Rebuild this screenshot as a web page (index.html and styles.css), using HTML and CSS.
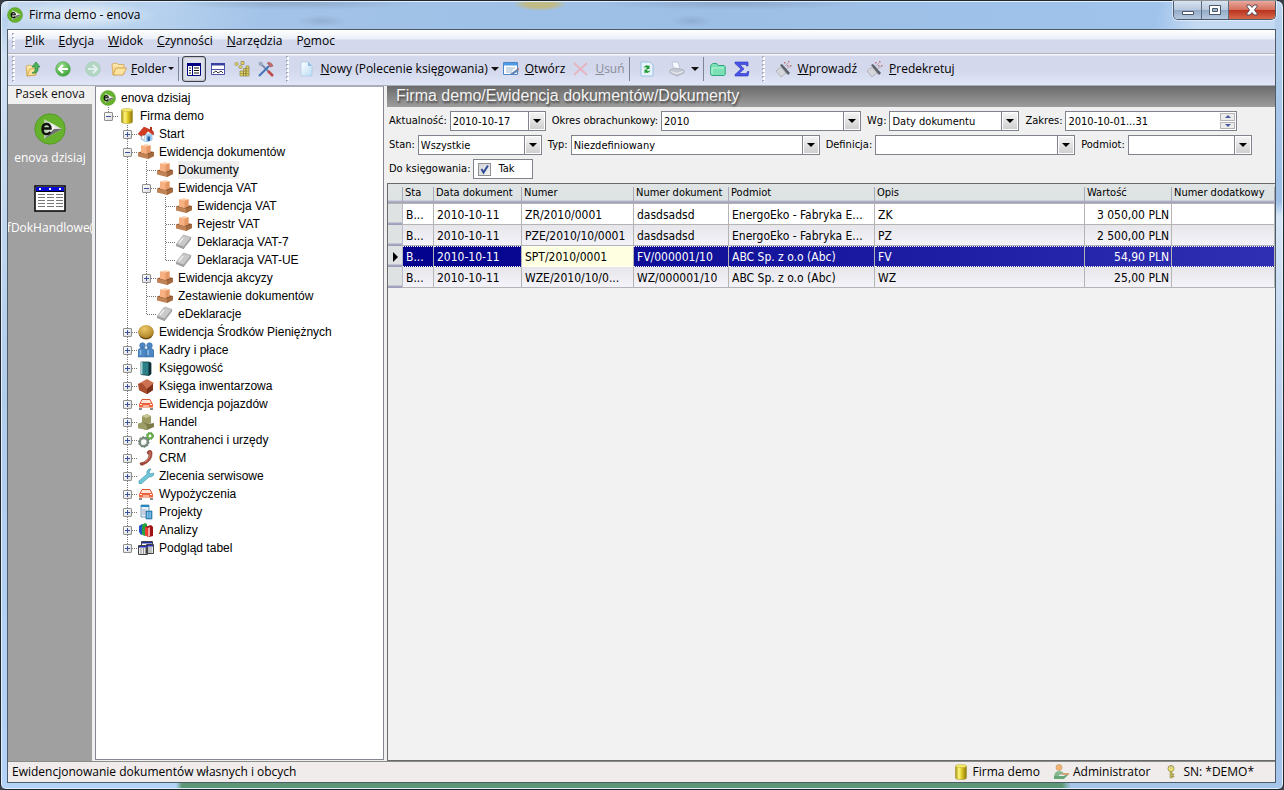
FILE: index.html
```html
<!DOCTYPE html>
<html lang="pl">
<head>
<meta charset="utf-8">
<meta name="viewport" content="width=device-width, initial-scale=1">
<title>Firma demo - enova</title>
<link rel="stylesheet" href="styles.css">
</head>
<body>
<svg class="defs" aria-hidden="true">
  <defs>
    <linearGradient id="gold" x1="0" x2="1"><stop offset="0" stop-color="#a08b10"/><stop offset=".3" stop-color="#fff67c"/><stop offset=".6" stop-color="#dcc420"/><stop offset="1" stop-color="#8a7710"/></linearGradient>
    <linearGradient id="tri" x1="0" x2="1"><stop offset="0" stop-color="#a9c99a"/><stop offset=".5" stop-color="#f4f4f4"/><stop offset="1" stop-color="#c4c4c4"/></linearGradient>
    <linearGradient id="paper" x1="0" x2="1" y1="0" y2="1"><stop offset="0" stop-color="#fff"/><stop offset="1" stop-color="#b9dcf6"/></linearGradient>
    <linearGradient id="fold" x1="0" x2="0" y1="0" y2="1"><stop offset="0" stop-color="#fdf0bd"/><stop offset="1" stop-color="#f0c15c"/></linearGradient>
    <radialGradient id="coin" cx=".4" cy=".3" r=".8"><stop offset="0" stop-color="#ecc868"/><stop offset="1" stop-color="#a67a1e"/></radialGradient>
    <radialGradient id="ball" cx=".4" cy=".3" r=".8"><stop offset="0" stop-color="#9fe08c"/><stop offset="1" stop-color="#2c9a2f"/></radialGradient>
    <symbol id="i-enova" viewBox="0 0 32 32"><circle cx="16" cy="16" r="15.200" fill="#66b22c" stroke="#4c9620" stroke-width=".8"/><path d="M10 6 28 16 10 26Z" fill="url(#tri)"/><path d="M10 26 28 16 20 16Z" fill="#6e6e6e"/><path d="M9 15.500h7.500c0-6-8-6-8 .5s5.500 6 8 3" fill="none" stroke="#111" stroke-width="2.400"/></symbol>
    <symbol id="i-db" viewBox="0 0 16 16"><path d="M2.500 2v12c0 2 11 2 11 0V2z" fill="url(#gold)" stroke="#a39020" stroke-width=".5"/><ellipse cx="8" cy="2" rx="5.500" ry="1.500" fill="#f6ec70" stroke="#b9a230" stroke-width=".5"/></symbol>
    <symbol id="i-home" viewBox="0 0 16 16"><path d="M3 8v5l5 3 6-2V8z" fill="#dcefff" stroke="#79a8cc" stroke-width=".6"/><path d="M8 9v7l6-2V8z" fill="#9cc9ee"/><path d="M0 8 6 1l9 4 1 4-2-1-4-3-5 6z" fill="#d23b22" stroke="#9f2512" stroke-width=".5"/><path d="M12 1h2v4h-2z" fill="#b83018"/><path d="M4 9.500h2.500v4H4z" fill="#fff" stroke="#999" stroke-width=".4"/><path d="M9.500 10.500h2.500V15H9.500z" fill="#245a9c"/></symbol>
    <symbol id="i-box" viewBox="0 0 16 16"><path d="M0 8.500 4 7l12 1v4l-6 3-10-2.500z" fill="#c08355"/><path d="M10 10.500 16 8v4l-6 3z" fill="#a5693f"/><path d="m0 8.500 10 2L16 8l-6-1z" fill="#7e4d2a"/><path d="M3 1.500 8 .5l4.500.8v7L8 10 3 8.800z" fill="#f7b081"/><path d="m8.500 2.500 4-1.200v7L8.500 10z" fill="#e59766"/><path d="m3 1.500 5.500 1 4-1.200L8 .5z" fill="#ffd3b2"/></symbol>
    <symbol id="i-doc" viewBox="0 0 16 16"><path d="M0 10.500 7.500 1 15 3.500 7.500 13z" fill="#c9c9c9" stroke="#949494" stroke-width=".6"/><path d="m0 10.500 7.500 2.500v2L0 12zM7.500 13 15 3.500v2L7.500 15z" fill="#808080"/><path d="m0 11.500 7.500 2.500L15 4.500" stroke="#ddd" stroke-width=".5" fill="none"/><path d="m3 9 4-5" stroke="#eee" stroke-width="1.500"/></symbol>
    <symbol id="i-coin" viewBox="0 0 16 16"><ellipse cx="8" cy="9" rx="7.500" ry="6.500" fill="#6e4d10"/><ellipse cx="8" cy="7.500" rx="7.700" ry="6.500" fill="url(#coin)"/></symbol>
    <symbol id="i-people" viewBox="0 0 16 16"><g fill="#4d88c4" stroke="#2c5f97" stroke-width=".5"><circle cx="4.500" cy="3.500" r="2.800"/><circle cx="11.500" cy="3.500" r="2.800"/><path d="M0 15V9q0-3 4.500-3T8.500 9v6z"/><path d="M8 15V9q0-3 3.500-3T16 9v6z"/></g><path d="M2.500 8v5M10 8v5" stroke="#8fbce8" stroke-width="1.500"/></symbol>
    <symbol id="i-book" viewBox="0 0 16 16"><path d="M3 2h8l2 1v11l-2 1.500-8-1z" fill="#2b8187" stroke="#123f44" stroke-width=".8"/><path d="m10.500 2 2.500 1v11l-2.500 1.500z" fill="#102c36"/><path d="M2.500 2h2v12.500l-2-.5z" fill="#a4cfd0"/></symbol>
    <symbol id="i-inv" viewBox="0 0 16 16"><path d="M1 7v5l8 4 6-4V5z" fill="#8d3b22"/><path d="M0 6 9 1l7 4-7 6z" fill="#cc7250"/><path d="m0 6 4-1 5 6v5l-8-4z" fill="#a94d2f"/><path d="M9 11l6-5v6l-6 4z" fill="#7b301b"/></symbol>
    <symbol id="i-car" viewBox="0 0 16 16"><path d="M4 3.500h8l2 4H2z" fill="#ffe3d8" stroke="#dc5835"/><path d="M1 7.500h14v4H1z" fill="#f0673d"/><path d="M2 8.500h2M12 8.500h2M5 10h6" stroke="#fff" stroke-width="1.200"/><path d="M1 12v2h3v-2M12 12v2h3v-2" fill="#888"/></symbol>
    <symbol id="i-trade" viewBox="0 0 16 16"><path d="M4 2 9 0l4 2v7l-5 2-4-2z" fill="#9b9b62"/><path d="m4 2 4 2 5-2-4-2z" fill="#c8c899"/><path d="m0 10 5-2 5 2 6-1v4l-7 3-9-2z" fill="#7c7c48"/><path d="m0 10 5-2 4 4v4l-9-2z" fill="#9d9d68"/></symbol>
    <symbol id="i-gears" viewBox="0 0 16 16"><circle cx="5.800" cy="10" r="4" fill="none" stroke="#7d8e80" stroke-width="2.500"/><circle cx="5.800" cy="10" r="5.200" fill="none" stroke="#5b6e60" stroke-dasharray="1.600 1.600"/><circle cx="12" cy="4" r="2.400" fill="none" stroke="#69ae50" stroke-width="2"/><circle cx="12" cy="4" r="3.500" fill="none" stroke="#408733" stroke-dasharray="1.400 1.400"/><path d="M3 12q3 2 5-1" stroke="#dfeae0" fill="none"/></symbol>
    <symbol id="i-phone" viewBox="0 0 16 16"><path d="M10 1q3-2 4 1 1 9-9 13-3 1-3-2l4-1q5-3 5-7l-2-2z" fill="#a84a3a" stroke="#7c2d22" stroke-width=".6"/><path d="M12 2q1 6-5 10" fill="none" stroke="#d58a79"/></symbol>
    <symbol id="i-wrench" viewBox="0 0 16 16"><path d="M1 13 9 6q-1-3 2-5h2l-2 3 1 2 4-1q0 4-5 4l-8 7q-3 0-2-3z" fill="#6fc7d8" stroke="#3b91a5" stroke-width=".6"/></symbol>
    <symbol id="i-proj" viewBox="0 0 16 16"><path d="M3 1h8v12H3z" fill="#e4f1fb" stroke="#7b9fb9"/><path d="M3 1h8v2H3z" fill="#2688bf"/><path d="M5 5v6M7 5v6" stroke="#99b" stroke-width=".8"/><path d="M8 7h6v8H8z" fill="#3a94c9" stroke="#1d6290" stroke-width=".6"/><path d="M9 9h4M9 11h4M9 13h4" stroke="#d9f1ff" stroke-dasharray="1 .6"/></symbol>
    <symbol id="i-chart" viewBox="0 0 16 16"><path d="m1 4 3-2 2 1v9l-3 1-2-3z" fill="#2455c8"/><path d="m4 3 3-2 2 1v11l-3 1-2-2z" fill="#29a13c"/><path d="M7 5 13 3l2 2v9l-4 1-4-2z" fill="#9e1414"/><path d="m7 5 3 1v9l-3-2z" fill="#ee3d33"/><path d="m10 6 2-1v9l-2 1z" fill="#f6a6a0"/></symbol>
    <symbol id="i-tables" viewBox="0 0 16 16"><path d="M3.500 1.500h11v9h-11z" fill="#fff" stroke="#444"/><path d="M4 2h10v1.500H4z" fill="#222c9c"/><path d="M.5 5.500h9v9h-9zM8.500 4.500h7v9h-7z" fill="#e8e8e8" stroke="#444"/><path d="M1 6h8v1.500H1zM9 5h6v1.500H9z" fill="#2630b4"/><path d="M3 8v6M5.500 8v6M7.500 8v6M11 7v6M13 7v6" stroke="#999"/></symbol>
    <symbol id="i-up" viewBox="0 0 16 16"><path d="M1 5l4-1 1 1h5v9l-9 1z" fill="url(#fold)" stroke="#c79a3e" stroke-width=".7"/><path d="m2 15 3-7 8-1-3 7z" fill="#fae29b" stroke="#c79a3e" stroke-width=".7"/><path d="M7 12q4-1 3-6H7l4-5 4 5h-2q1 7-6 6z" fill="#50b35a" stroke="#27803c" stroke-width=".7"/></symbol>
    <symbol id="i-back" viewBox="0 0 16 16"><circle cx="8" cy="8" r="7.300" fill="url(#ball)" stroke="#5cae5c" stroke-width=".7"/><path d="M13 8H5M8 4 4 8l4 4" fill="none" stroke="#fff" stroke-width="2.200"/></symbol>
    <symbol id="i-fwd" viewBox="0 0 16 16"><circle cx="8" cy="8" r="7.300" fill="#b2d6c2" stroke="#a6cdba" stroke-width=".7"/><path d="M3 8h8M8 4l4 4-4 4" fill="none" stroke="#e2eeee" stroke-width="2.200"/></symbol>
    <symbol id="i-folder" viewBox="0 0 16 16"><path d="M1 3l5-1 1 1.500h6V13l-11 1z" fill="url(#fold)" stroke="#cf9b45" stroke-width=".7"/><path d="m2 14 3-7h10.500L12 14z" fill="#fbe3a0" stroke="#cf9b45" stroke-width=".8"/></symbol>
    <symbol id="i-list" viewBox="0 0 16 16"><path d="M1.500 2.500h13v12h-13z" fill="#fff" stroke="#000080"/><path d="M1 2h14v3H1z" fill="#000080"/><path d="M6.500 4v10" stroke="#000080"/><path d="M3 7h2M3 9.500h2M3 12h2M8 7h5M8 9.500h5M8 12h5" stroke="#111"/></symbol>
    <symbol id="i-form" viewBox="0 0 16 16"><path d="M1.500 2.500h13v11h-13z" fill="#fff" stroke="#4b52a8"/><path d="M1 2h14v2.500H1z" fill="#3940a0"/><path d="M1 8.500h14" stroke="#4b52a8"/><path d="m3 12 3-2 2 2 3-2 2 2" fill="none" stroke="#333"/></symbol>
    <symbol id="i-grid" viewBox="0 0 16 16"><g fill="#e4d468" stroke="#817637" stroke-width=".6"><path d="m2.500 1 2 2-2 2-2-2zM6.500 4l2 2-2 2-2-2z"/><path d="M7 .5h3v3H7zM6 10h3.500v5H6zM9.500 7.500H12V15H9.500zM12 5h3v10h-3zM6 12.500h9M9.500 10H15M12 7.500h3"/></g></symbol>
    <symbol id="i-tools" viewBox="0 0 16 16"><path d="M3 3 14 14" stroke="#7a89a8" stroke-width="1.800"/><path d="M1 1q4-1 4 3l-3 1q-2-1-1-4z" fill="#9daac3"/><path d="M10 10 15 15" stroke="#c14a4a" stroke-width="2.500"/><path d="M1 15 11 5" stroke="#4374b9" stroke-width="2"/><path d="M9 2q4-2 6 3l-3 1-1-2z" fill="#c06b6b" stroke="#954646" stroke-width=".5"/></symbol>
    <symbol id="i-new" viewBox="0 0 16 16"><path d="M3 1h7l4 4v10H3z" fill="url(#paper)" stroke="#a6c8e6" stroke-width=".7"/><path d="M10 1v4h4z" fill="#8ebce2"/></symbol>
    <symbol id="i-open" viewBox="0 0 16 16"><path d="M.5 1.500h14v12H.5z" fill="#fff" stroke="#4d86c9"/><path d="M1 2h13v2.500H1z" fill="#4b9be6"/><path d="M3 7h9M3 9h7M3 11h6" stroke="#9eb5ce"/><path d="M7 13l7-5 2 2-7 4z" fill="#6687b4"/><path d="m14 8 2-1v2z" fill="#d25f48"/></symbol>
    <symbol id="i-del" viewBox="0 0 16 16"><path d="m1 2 13 12M14 2 1 14" stroke="#e6b5bf" stroke-width="1.800"/></symbol>
    <symbol id="i-ref" viewBox="0 0 16 16"><path d="M2 1h9l3 3v11H2z" fill="#e8f3fd" stroke="#8db7dc" stroke-width=".8"/><path d="M4.500 7q2-4 5-2l1-1v4H7l1-1.500Q6 6 4.500 7zM11.500 9q-1.500 4-5 2.500l-1 1V8.500H9L8 10q2 .5 3.500-1z" fill="#1d9a2c"/></symbol>
    <symbol id="i-print" viewBox="0 0 16 16"><path d="m3 1 6 0 2 6-6 2z" fill="#f4f7fb" stroke="#a6b1c2" stroke-width=".6"/><path d="m1 9 5-2 9 2v3l-7 3-7-3z" fill="#c4c8d2" stroke="#9ba1ad" stroke-width=".6"/><path d="m2 10.500 6 2 6-2" stroke="#f3f3f3" fill="none"/></symbol>
    <symbol id="i-gfold" viewBox="0 0 16 16"><path d="M.7 13.500v-9l2-2h4l1.500 2h6l1 1v8l-1 1H2z" fill="#7be0b3" stroke="#2fa67d"/><path d="M2 13V7h12" fill="none" stroke="#b7f6da" stroke-width="1.200"/></symbol>
    <symbol id="i-sigma" viewBox="0 0 16 16"><path d="M1 1h13v4h-1.500L12 3.500H6L10 8l-5 4.500h7.500l1-2H15L14 15H1v-1.500L7 8 1 2.500z" fill="#4a55e8" stroke="#2733bc" stroke-width=".6"/></symbol>
    <symbol id="i-wand" viewBox="0 0 16 16"><path d="m0 10 5-4 5 6-5 4z" fill="#d4d6da" stroke="#9a9da4" stroke-width=".6"/><path d="m4 4 2-1 8 9-2 2z" fill="#5b5f68"/><path d="M8 6 12 2M10 8l5-3" stroke="#9c9ca5" stroke-width=".7"/><g fill="#c77878"><path d="M8 1h1.500v1.500H8zM12 0h1.500v1.500H12zM14 4h1.500v1.500H14zM11 4h1.500v1.500H11z"/></g></symbol>
    <symbol id="i-admin" viewBox="0 0 16 16"><circle cx="6" cy="3.500" r="3" fill="#efb476" stroke="#c4894f" stroke-width=".5"/><path d="M1 14q0-7 5-7 4 0 5 3l-5 1v4H2z" fill="#84b890"/><path d="M1 12h10l4-3v2l-4 4H1z" fill="#69a77b"/><path d="M9 9h7v2H9z" fill="#d3a271"/></symbol>
    <symbol id="i-key" viewBox="0 0 16 16"><circle cx="8" cy="4.500" r="3" fill="#f5ea75" stroke="#89823e" stroke-width=".8"/><circle cx="8" cy="3.500" r="1" fill="#fff" stroke="#89823e" stroke-width=".5"/><path d="M7 8h2v6H7zM9 10h2v1H9zM9 12h2v1H9z" fill="#cfc35b" stroke="#89823e" stroke-width=".5"/></symbol>
    <symbol id="i-tbl" viewBox="0 0 32 28"><path d="M1 1h30v25H1z" fill="#fff" stroke="#000" stroke-width="1.500"/><path d="M2 2h28v4H2z" fill="#0a0ad8"/><path d="M5 3h2v2H5zM15 3h2v2h-2zM25 3h2v2h-2z" fill="#fff"/><path d="M2 6.500h28" stroke="#000"/><path d="M4 9.500h7M13 9.500h7M22 9.500h7M4 12.500h7M13 12.500h7M22 12.500h7M4 15.500h7M13 15.500h7M22 15.500h7M4 18.500h7M13 18.500h7M22 18.500h7M4 21.500h7M13 21.500h7M22 21.500h7" stroke="#777"/></symbol>
  </defs>
</svg>

<div class="window">
  <header class="titlebar">
    <div class="glow"><svg class="ic"><use href="#i-enova"/></svg><h1>Firma demo - enova</h1></div>
    <div class="caption">
      <button class="cap cap-min" aria-label="Minimalizuj"><svg viewBox="0 0 14 12"><path d="M1.500 7.500h11v3h-11z" fill="#fff" stroke="#4c5768"/></svg></button>
      <button class="cap" aria-label="Maksymalizuj"><svg viewBox="0 0 14 12"><path d="M1.500 1.500h11v9h-11z" fill="#fff" stroke="#4c5768"/><path d="M4.500 4.500h5v3h-5z" fill="#9fb4cd" stroke="#4c5768"/></svg></button>
      <button class="cap cap-close" aria-label="Zamknij"><svg viewBox="0 0 14 12"><path d="M2 1h3l2 2.500L9 1h3v1.500L9.500 6 12 9.500V11H9L7 8.500 5 11H2V9.500L4.500 6 2 2.500z" fill="#fff" stroke="#5a4a58"/></svg></button>
    </div>
  </header>

  <div class="client">
    <nav class="menubar">
      <span class="grip"></span>
      <button><u>P</u>lik</button><button><u>E</u>dycja</button><button><u>W</u>idok</button><button><u>C</u>zynności</button><button><u>N</u>arzędzia</button><button>P<u>o</u>moc</button>
    </nav>
    <div class="toolbar" role="toolbar">
      <div class="group nav">
        <span class="grip"></span>
        <button aria-label="W górę"><svg class="ic"><use href="#i-up"/></svg></button>
        <button aria-label="Wstecz"><svg class="ic"><use href="#i-back"/></svg></button>
        <button aria-label="Dalej" disabled><svg class="ic"><use href="#i-fwd"/></svg></button>
        <button><svg class="ic"><use href="#i-folder"/></svg><span><u>F</u>older</span><i class="caret"></i></button>
      </div>
      <span class="sep"></span>
      <div class="group views">
        <button class="pressed" aria-label="Lista"><svg class="ic"><use href="#i-list"/></svg></button>
        <button aria-label="Formularz"><svg class="ic"><use href="#i-form"/></svg></button>
        <button aria-label="Układ"><svg class="ic"><use href="#i-grid"/></svg></button>
        <button aria-label="Narzędzia"><svg class="ic"><use href="#i-tools"/></svg></button>
      </div>
      <div class="group edit">
        <span class="grip"></span>
        <button class="new"><svg class="ic"><use href="#i-new"/></svg><span><u>N</u>owy (Polecenie księgowania)</span><i class="caret"></i></button>
        <button><svg class="ic"><use href="#i-open"/></svg><span><u>O</u>twórz</span></button>
        <button disabled><svg class="ic"><use href="#i-del"/></svg><span><u>U</u>suń</span></button>
      </div>
      <span class="sep"></span>
      <div class="group output">
        <button aria-label="Odśwież"><svg class="ic"><use href="#i-ref"/></svg></button>
        <button aria-label="Drukuj"><svg class="ic"><use href="#i-print"/></svg><i class="caret"></i></button>
      </div>
      <span class="sep"></span>
      <div class="group sums">
        <button aria-label="Załączniki"><svg class="ic"><use href="#i-gfold"/></svg></button>
        <button aria-label="Suma"><svg class="ic"><use href="#i-sigma"/></svg></button>
      </div>
      <div class="group post">
        <span class="grip"></span>
        <button><svg class="ic"><use href="#i-wand"/></svg><span><u>W</u>prowadź</span></button>
        <button><svg class="ic"><use href="#i-wand"/></svg><span><u>P</u>redekretuj</span></button>
      </div>
    </div>

    <main class="work">
      <aside class="bar">
        <h2>Pasek enova</h2>
        <button><svg class="big"><use href="#i-enova"/></svg><span>enova dzisiaj</span></button>
        <button><svg class="big"><use href="#i-tbl"/></svg><span>fDokHandlowe(</span></button>
      </aside>

      <nav class="tree">
        <a class="row" href="#"><svg class="ic"><use href="#i-enova"/></svg>enova dzisiaj</a>
        <ul>
          <li>
            <div class="row"><span class="node"><button class="tw open" aria-label="Zwiń"></button></span><svg class="ic"><use href="#i-db"/></svg><a href="#">Firma demo</a></div>
            <ul>
              <li><div class="row"><span class="node"><button class="tw" aria-label="Rozwiń"></button></span><svg class="ic"><use href="#i-home"/></svg><a href="#">Start</a></div></li>
              <li>
                <div class="row"><span class="node"><button class="tw open" aria-label="Zwiń"></button></span><svg class="ic"><use href="#i-box"/></svg><a href="#">Ewidencja dokumentów</a></div>
                <ul>
                  <li><div class="row"><span class="node"></span><svg class="ic"><use href="#i-box"/></svg><a class="current" href="#">Dokumenty</a></div></li>
                  <li>
                    <div class="row"><span class="node"><button class="tw open" aria-label="Zwiń"></button></span><svg class="ic"><use href="#i-box"/></svg><a href="#">Ewidencja VAT</a></div>
                    <ul>
                      <li><div class="row"><span class="node"></span><svg class="ic"><use href="#i-box"/></svg><a href="#">Ewidencja VAT</a></div></li>
                      <li><div class="row"><span class="node"></span><svg class="ic"><use href="#i-box"/></svg><a href="#">Rejestr VAT</a></div></li>
                      <li><div class="row"><span class="node"></span><svg class="ic"><use href="#i-doc"/></svg><a href="#">Deklaracja VAT-7</a></div></li>
                      <li><div class="row"><span class="node"></span><svg class="ic"><use href="#i-doc"/></svg><a href="#">Deklaracja VAT-UE</a></div></li>
                    </ul>
                  </li>
                  <li><div class="row"><span class="node"><button class="tw" aria-label="Rozwiń"></button></span><svg class="ic"><use href="#i-box"/></svg><a href="#">Ewidencja akcyzy</a></div></li>
                  <li><div class="row"><span class="node"></span><svg class="ic"><use href="#i-box"/></svg><a href="#">Zestawienie dokumentów</a></div></li>
                  <li><div class="row"><span class="node"></span><svg class="ic"><use href="#i-doc"/></svg><a href="#">eDeklaracje</a></div></li>
                </ul>
              </li>
              <li><div class="row"><span class="node"><button class="tw" aria-label="Rozwiń"></button></span><svg class="ic"><use href="#i-coin"/></svg><a href="#">Ewidencja Środków Pieniężnych</a></div></li>
              <li><div class="row"><span class="node"><button class="tw" aria-label="Rozwiń"></button></span><svg class="ic"><use href="#i-people"/></svg><a href="#">Kadry i płace</a></div></li>
              <li><div class="row"><span class="node"><button class="tw" aria-label="Rozwiń"></button></span><svg class="ic"><use href="#i-book"/></svg><a href="#">Księgowość</a></div></li>
              <li><div class="row"><span class="node"><button class="tw" aria-label="Rozwiń"></button></span><svg class="ic"><use href="#i-inv"/></svg><a href="#">Księga inwentarzowa</a></div></li>
              <li><div class="row"><span class="node"><button class="tw" aria-label="Rozwiń"></button></span><svg class="ic"><use href="#i-car"/></svg><a href="#">Ewidencja pojazdów</a></div></li>
              <li><div class="row"><span class="node"><button class="tw" aria-label="Rozwiń"></button></span><svg class="ic"><use href="#i-trade"/></svg><a href="#">Handel</a></div></li>
              <li><div class="row"><span class="node"><button class="tw" aria-label="Rozwiń"></button></span><svg class="ic"><use href="#i-gears"/></svg><a href="#">Kontrahenci i urzędy</a></div></li>
              <li><div class="row"><span class="node"><button class="tw" aria-label="Rozwiń"></button></span><svg class="ic"><use href="#i-phone"/></svg><a href="#">CRM</a></div></li>
              <li><div class="row"><span class="node"><button class="tw" aria-label="Rozwiń"></button></span><svg class="ic"><use href="#i-wrench"/></svg><a href="#">Zlecenia serwisowe</a></div></li>
              <li><div class="row"><span class="node"><button class="tw" aria-label="Rozwiń"></button></span><svg class="ic"><use href="#i-car"/></svg><a href="#">Wypożyczenia</a></div></li>
              <li><div class="row"><span class="node"><button class="tw" aria-label="Rozwiń"></button></span><svg class="ic"><use href="#i-proj"/></svg><a href="#">Projekty</a></div></li>
              <li><div class="row"><span class="node"><button class="tw" aria-label="Rozwiń"></button></span><svg class="ic"><use href="#i-chart"/></svg><a href="#">Analizy</a></div></li>
              <li><div class="row"><span class="node"><button class="tw" aria-label="Rozwiń"></button></span><svg class="ic"><use href="#i-tables"/></svg><a href="#">Podgląd tabel</a></div></li>
            </ul>
          </li>
        </ul>
      </nav>

      <section class="panel">
        <h2 class="crumb">Firma demo/Ewidencja dokumentów/Dokumenty</h2>
        <form class="filters">
          <div class="line">
            <label for="f1">Aktualność:</label><select id="f1" class="w-s"><option>2010-10-17</option></select>
            <label for="f2">Okres obrachunkowy:</label><select id="f2" class="w-l"><option>2010</option></select>
            <label for="f3">Wg:</label><select id="f3" class="w-m"><option>Daty dokumentu</option></select>
            <label for="f4">Zakres:</label><span class="spin"><input id="f4" type="text" value="2010-10-01...31"><span class="arrows"><button type="button" aria-label="Następny"><i class="tri up"></i></button><button type="button" aria-label="Poprzedni"><i class="tri down"></i></button></span></span>
          </div>
          <div class="line">
            <label for="f5">Stan:</label><select id="f5" class="w-m"><option>Wszystkie</option></select>
            <label for="f6">Typ:</label><select id="f6" class="w-xl"><option>Niezdefiniowany</option></select>
            <label for="f7">Definicja:</label><select id="f7" class="w-l"><option></option></select>
            <label for="f8">Podmiot:</label><select id="f8" class="w-m"><option></option></select>
          </div>
          <div class="line">
            <span class="cap-label">Do księgowania:</span><label class="check"><input type="checkbox" checked><span>Tak</span></label>
          </div>
        </form>
        <div class="gridwrap">
          <table class="grid">
            <colgroup><col class="c-h"><col class="c-sta"><col class="c-date"><col class="c-num"><col class="c-doc"><col class="c-sub"><col><col class="c-val"><col class="c-add"></colgroup>
            <thead><tr><th></th><th>Sta</th><th>Data dokument</th><th>Numer</th><th>Numer dokument</th><th>Podmiot</th><th>Opis</th><th>Wartość</th><th>Numer dodatkowy</th></tr></thead>
            <tbody>
              <tr><th></th><td>B...</td><td>2010-10-11</td><td>ZR/2010/0001</td><td>dasdsadsd</td><td>EnergoEko - Fabryka E...</td><td>ZK</td><td class="r">3 050,00 PLN</td><td></td></tr>
              <tr class="alt"><th></th><td>B...</td><td>2010-10-11</td><td>PZE/2010/10/0001</td><td>dasdsadsd</td><td>EnergoEko - Fabryka E...</td><td>PZ</td><td class="r">2 500,00 PLN</td><td></td></tr>
              <tr class="sel"><th><i class="marker"></i></th><td>B...</td><td>2010-10-11</td><td class="edit-cell">SPT/2010/0001</td><td>FV/000001/10</td><td>ABC Sp. z o.o (Abc)</td><td>FV</td><td class="r">54,90 PLN</td><td></td></tr>
              <tr class="alt"><th></th><td>B...</td><td>2010-10-11</td><td>WZE/2010/10/0...</td><td>WZ/000001/10</td><td>ABC Sp. z o.o (Abc)</td><td>WZ</td><td class="r">25,00 PLN</td><td></td></tr>
            </tbody>
          </table>
        </div>
      </section>
    </main>

    <footer class="status">
      <span class="msg">Ewidencjonowanie dokumentów własnych i obcych</span>
      <span class="item"><svg class="ic"><use href="#i-db"/></svg>Firma demo</span>
      <span class="item"><svg class="ic"><use href="#i-admin"/></svg>Administrator</span>
      <span class="item"><svg class="ic"><use href="#i-key"/></svg>SN: *DEMO*</span>
    </footer>
  </div>
</div>
</body>
</html>
```
FILE: styles.css
```css
:root {
  --ui: "Open Sans", "Noto Sans", sans-serif;
  --tahoma: "DejaVu Sans Condensed", "Noto Sans", sans-serif;
  --arial: "Liberation Sans", Arial, sans-serif;
}
* { box-sizing: border-box; }
body { margin: 0; background: #3a3f48; font: 12px/16px var(--ui); color: #000; }
button { border: 0; padding: 0; background: none; font: inherit; color: inherit; }
h1, h2 { margin: 0; font: inherit; }
ul { list-style: none; margin: 0; padding: 0; }
a { color: inherit; text-decoration: none; }
.defs { position: absolute; width: 0; height: 0; }
.ic { width: 16px; height: 16px; flex: none; }

.window {
  min-height: 100vh;
  display: flex;
  flex-direction: column;
  padding: 0 7px 6px 6px;
  border: 1px solid #20262e;
  border-radius: 7px 7px 6px 6px;
  box-shadow: inset 0 0 0 1px #e4effa;
  background:
    linear-gradient(90deg, #b4d3f8 175px, #5b9774 181px, #5b9774 1061px, #a7c5ea 1070px) bottom / 100% 6px no-repeat,
    linear-gradient(#d7e5f4, #b6d0ec 18px, #cfe0f2 55px, #b0cdec 50%, #b4d3f8) left / 7px 100% no-repeat,
    linear-gradient(#c4d9f2, #b6d0ec 18px, #9dbfe6 200px, #d7e6f6 215px, #9dc0e6 75%, #a7c5ea) right / 8px 100% no-repeat,
    radial-gradient(closest-side, #c9b96ecc 50%, #c9b96e00) 512px -4px / 54px 14px no-repeat,
    radial-gradient(closest-side, #7d93b280, #7d93b200) 594px -5px / 270px 14px no-repeat,
    radial-gradient(closest-side, #7d93b280, #7d93b200) 170px -5px / 250px 14px no-repeat,
    radial-gradient(closest-side, #7d93b266, #7d93b200) 296px 14px / 50px 12px no-repeat,
    radial-gradient(closest-side, #7d93b266, #7d93b200) 670px 14px / 42px 12px no-repeat,
    linear-gradient(100deg, #c4d8ee, #b6d1ee 160px, #a3c3e8 260px, #9dbfe6 700px, #a0c3eb 1140px, #c4d9f2 1180px);
}
.titlebar { height: 28px; display: flex; justify-content: space-between; align-items: flex-start; }
.glow { display: flex; align-items: center; gap: 6px; height: 28px; padding-right: 16px; background: radial-gradient(closest-side, #e8f1fa, #e8f1fa00); }
.caption { display: flex; border: 1px solid #4c5a6b; border-top: 0; border-radius: 0 0 5px 5px; overflow: hidden; box-shadow: 0 0 0 1px #ffffff80; }
.cap { width: 27px; height: 18px; display: grid; place-items: center; background: linear-gradient(#d8e3ef, #b9cadf 48%, #93a9c4 50%, #b5c8df); border-left: 1px solid #5d6c80; }
.cap-min { border-left: 0; }
.cap svg { width: 14px; height: 12px; }
.cap-close { width: 47px; background: linear-gradient(#e9a99d, #d5705e 48%, #b7301c 50%, #d9694a); }

.client { flex: 1; display: flex; flex-direction: column; border: 1px solid #4e5b68; background: #f0f0f0; }
.menubar { height: 24px; display: flex; align-items: center; gap: 14px; padding: 0 4px 2px; background: linear-gradient(#fff, #eaeff7 9px, #d3d8ec 10px, #d3d8ec); border-bottom: 1px solid #b4b4b8; }
.grip { width: 3px; height: 16px; background: linear-gradient(#fff, #fff) 1px 1px / 2px 2px, #a9aec4; background: conic-gradient(from 90deg at 1px 1px, #fff 25%, transparent 0) 0 0 / 3px 4px, conic-gradient(from 270deg at 2px 2px, #a4a9be 25%, transparent 0) 0 0 / 3px 4px; }
.menubar .grip { margin-right: -4px; }
.toolbar { height: 32px; display: flex; align-items: center; padding: 0 4px 2px; background: linear-gradient(#f6f8fd 1px, #d3d8ec 2px, #d3d8ec 16px, #e0e6f8); border-bottom: 1px solid #a9adba; }
.toolbar .grip { height: 26px; }
.toolbar button { display: flex; align-items: center; gap: 6px; height: 26px; white-space: nowrap; }
.toolbar button:disabled { color: #8a8d98; }
.group { display: flex; align-items: center; gap: 8px; }
.nav { gap: 14px; }
.nav .grip { margin-right: -4px; }
.toolbar .nav button:last-child { margin-left: -4px; gap: 4px; }
.caret { width: 0; height: 0; border: 4px solid transparent; border-top-color: #111; border-bottom: 0; }
.nav .caret { border-width: 3px 3px 0; margin-left: -2px; }
.sep { width: 1px; height: 24px; margin: 0 3px 0 4px; background: #7f8496; }
.views .pressed { width: 24px; margin-right: -4px; justify-content: center; border: 1px solid #3c4050; border-radius: 3px; background: #dfe1ea; box-shadow: inset 0 0 2px #777; }
.views { margin-right: 12px; }
.edit .grip, .post .grip { margin-right: 1px; }
.toolbar .new { margin-right: -4px; }
.new .caret { margin-left: -3px; }
.output { gap: 14px; padding-left: 6px; }
.sums { padding: 0 12px 0 3px; }
.post { gap: 10px; }

.work { flex: 1; display: flex; }
.bar { width: 84px; flex: none; display: flex; flex-direction: column; background: #a0a0a0; color: #fff; overflow: hidden; }
.bar h2 { height: 18px; text-align: center; background: #f0f0f0; color: #111; line-height: 16px; }
.bar button { display: flex; flex-direction: column; align-items: center; gap: 4px; white-space: nowrap; }
.bar button:nth-of-type(1) { margin: 9px 0 17px; }
.big { width: 32px; height: 32px; }
.bar span { line-height: 17px; }

.tree { width: 289px; flex: none; margin: 0 3px 1px 3px; padding: 2px 0 0 3px; background: #fff; border: 1px solid #828790; border-top-color: #a9adba; font: 12px/18px var(--arial); white-space: nowrap; }
.row { display: flex; align-items: center; height: 18px; }
.row .ic { margin: 0 5px 0 1px; }
.node { width: 19px; height: 18px; display: grid; place-items: center; background: repeating-linear-gradient(90deg, #777 0 1px, transparent 1px 2px) 10px 9px / 9px 1px no-repeat; }
.tree ul ul { padding-left: 19px; }
.tree li { position: relative; }
.tree li::before { content: ""; position: absolute; left: 9px; top: 0; bottom: 0; width: 1px; background: repeating-linear-gradient(#777 0 1px, transparent 1px 2px); }
.tree li:last-child::before { bottom: auto; height: 10px; }
.tw { position: relative; width: 9px; height: 9px; border: 1px solid #8f8f8f; border-radius: 1px; background: linear-gradient(#3a52a0, #3a52a0) 1px 3px / 5px 1px no-repeat, linear-gradient(#3a52a0, #3a52a0) 3px 1px / 1px 5px no-repeat, linear-gradient(135deg, #fff, #dcdcdc); }
.tw.open { background: linear-gradient(#3a52a0, #3a52a0) 1px 3px / 5px 1px no-repeat, linear-gradient(135deg, #fff, #dcdcdc); }
.current { background: #eee; }

.panel { flex: 1; min-width: 0; display: flex; flex-direction: column; }
.crumb { height: 21px; padding-left: 9px; background: linear-gradient(#6b6b6b, #9d9d9d); color: #f4f4f4; font: 16px/20px var(--arial); text-shadow: 1px 2px 2px #444; }
.filters { display: flex; flex-direction: column; gap: 4px; padding: 4px 0 4px 2px; font: 11px/14px var(--tahoma); }
.line { display: flex; align-items: center; white-space: nowrap; }
.line > label, .cap-label { margin-right: 3px; }
.line select + label { margin-left: 6px; }
select, .spin, .check { height: 20px; border: 1px solid #7f838b; border-radius: 0; background-color: #fff; font: inherit; color: #000; }
select { appearance: none; padding: 1px 20px 0 2px; background: #fff url("data:image/svg+xml,%3Csvg xmlns='http://www.w3.org/2000/svg' width='17' height='18'%3E%3ClinearGradient id='g' x2='0' y2='1'%3E%3Cstop stop-color='%23f4f4f4'/%3E%3Cstop offset='1' stop-color='%23cfcfcf'/%3E%3C/linearGradient%3E%3Cpath d='M0 0h17v18H0z' fill='%23fff'/%3E%3Cpath d='M0 0h1v18H0z' fill='%237f838b'/%3E%3Cpath d='M2 1h14v16H2z' fill='url(%23g)'/%3E%3Cpath d='M5 7h8L9 11z'/%3E%3C/svg%3E") right center no-repeat; }
.w-s { width: 96px; }
.w-m { width: 124px; }
#f3 { width: 130px; }
.w-l { width: 200px; }
.w-xl { width: 249px; }
.spin { width: 172px; display: flex; }
.spin input { flex: 1; min-width: 0; border: 0; padding: 1px 2px 0; font: inherit; outline: 0; }
.arrows { display: flex; flex-direction: column; width: 17px; padding: 1px; gap: 1px; }
.arrows button { flex: 1; display: grid; place-items: center; border: 1px solid #b5b5b5; background: #ececec; }
.tri { border: 3px solid transparent; }
.up { border-top: 0; border-bottom-color: #4a5a9c; }
.down { border-bottom: 0; border-top-color: #4a5a9c; }
.check { display: flex; align-items: center; gap: 7px; width: 60px; padding-left: 4px; }
.check input { appearance: none; margin: 0; width: 13px; height: 13px; border: 1px solid #8e8f8f; background: url("data:image/svg+xml,%3Csvg xmlns='http://www.w3.org/2000/svg' viewBox='0 0 11 11'%3E%3Cpath d='M2.500 5l2 3.500L9 1.500' fill='none' stroke='%23314e94' stroke-width='2'/%3E%3C/svg%3E") center / 11px no-repeat, linear-gradient(135deg, #d2d4d8, #f4f4f4); }

.gridwrap { flex: 1; background: #f2f2f2; border: 1px solid #6a6a6a; border-right: 0; }
.grid { width: 100%; table-layout: fixed; border-collapse: separate; border-spacing: 0; font: 12px/16px var(--tahoma); }
.c-h { width: 15px; }
.c-sta { width: 31px; }
.c-date { width: 88px; }
.c-num { width: 112px; }
.c-doc { width: 95px; }
.c-sub { width: 146px; }
.c-val { width: 87px; }
.c-add { width: 103px; }
.grid th, .grid td { padding: 1px 2px 0 3px; white-space: nowrap; overflow: hidden; text-align: left; font-weight: 400; }
.grid thead th { height: 20px; padding: 0 2px 1px; font-size: 11px; border-bottom: 1px solid #b4b4b4; background: linear-gradient(#a9a9b8, #a9a9b8) right 3px / 1px 14px no-repeat, linear-gradient(#e0e4e5, #dde2e3 16px, #b9b8cd 17px, #9c99b4); }
.grid td { height: 21px; border-bottom: 1px solid #b4b4b4; border-right: 1px solid #b4b4b4; background: #fff; }
.grid tbody th { padding: 0; border-right: 1px solid #b9b9c8; background: linear-gradient(#dee2e3 18px, #aaa8c2 19px, #9c99b4); }
.grid .alt td { background: linear-gradient(#e6e6ea, #f4f3fa); }
.grid .sel td { padding-top: 0; color: #fff; border-top: 1px dotted #fff; border-bottom: 1px dotted #fff; background: linear-gradient(90deg, #00008c 30%, #3030b4) fixed; }
.grid .sel .edit-cell { background: #ffffe1; color: #000; }
.grid .r { text-align: right; }
.marker { display: block; width: 0; margin: auto; border: 5px solid transparent; border-left-color: #000; border-right: 0; }

.status { height: 21px; display: flex; align-items: center; padding: 0 21px 0 4px; background: #f0eceb; border-top: 1px solid #8a8a8a; white-space: nowrap; }
.msg { flex: 1; }
.item { display: flex; align-items: center; gap: 4px; margin-left: 13px; }
```
